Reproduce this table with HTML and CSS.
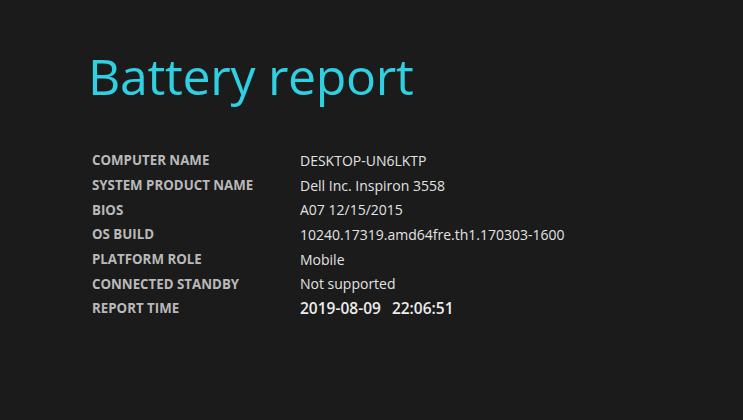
FILE: index.html
```html
<!DOCTYPE html>
<html>
<head>
<meta charset="utf-8">
<link rel="stylesheet" href="styles.css">
</head>
<body>
<main class="report">
  <h1 class="title">Battery report</h1>
  <table class="info">
    <tr><td class="label">COMPUTER NAME</td><td class="value">DESKTOP-UN6LKTP</td></tr>
    <tr><td class="label">SYSTEM PRODUCT NAME</td><td class="value">Dell Inc. Inspiron 3558</td></tr>
    <tr><td class="label">BIOS</td><td class="value">A07 12/15/2015</td></tr>
    <tr><td class="label">OS BUILD</td><td class="value">10240.17319.amd64fre.th1.170303-1600</td></tr>
    <tr><td class="label">PLATFORM ROLE</td><td class="value">Mobile</td></tr>
    <tr><td class="label">CONNECTED STANDBY</td><td class="value">Not supported</td></tr>
    <tr><td class="label">REPORT TIME</td><td class="value date"><span>2019-08-09</span><span class="time">22:06:51</span></td></tr>
  </table>
</main>
</body>
</html>
```
FILE: styles.css
```css
html, body {
  margin: 0;
  padding: 0;
  background: #1b1b1b;
  height: 100%;
}
body {
  font-family: "Open Sans", "Noto Sans", sans-serif;
  color: #e6e6e6;
}
.report {
  padding: 42px 0 0 88px;
}
.title {
  margin: 0;
  font-weight: 400;
  font-size: 50px;
  line-height: 68px;
  color: #2fd0e2;
  letter-spacing: -0.3px;
}
.info {
  margin: 38px 0 0 4px;
  border-collapse: collapse;
}
.info td {
  padding: 0;
  height: 24.7px;
  vertical-align: middle;
}
.label {
  width: 208px;
  font-size: 13.3px;
  font-weight: 700;
  color: #b9b9b9;
}
.value {
  font-size: 14px;
  color: #e2e2e2;
}
.date {
  font-size: 15.5px;
  font-weight: 600;
  color: #ececec;
}
.time {
  margin-left: 11px;
}
```
